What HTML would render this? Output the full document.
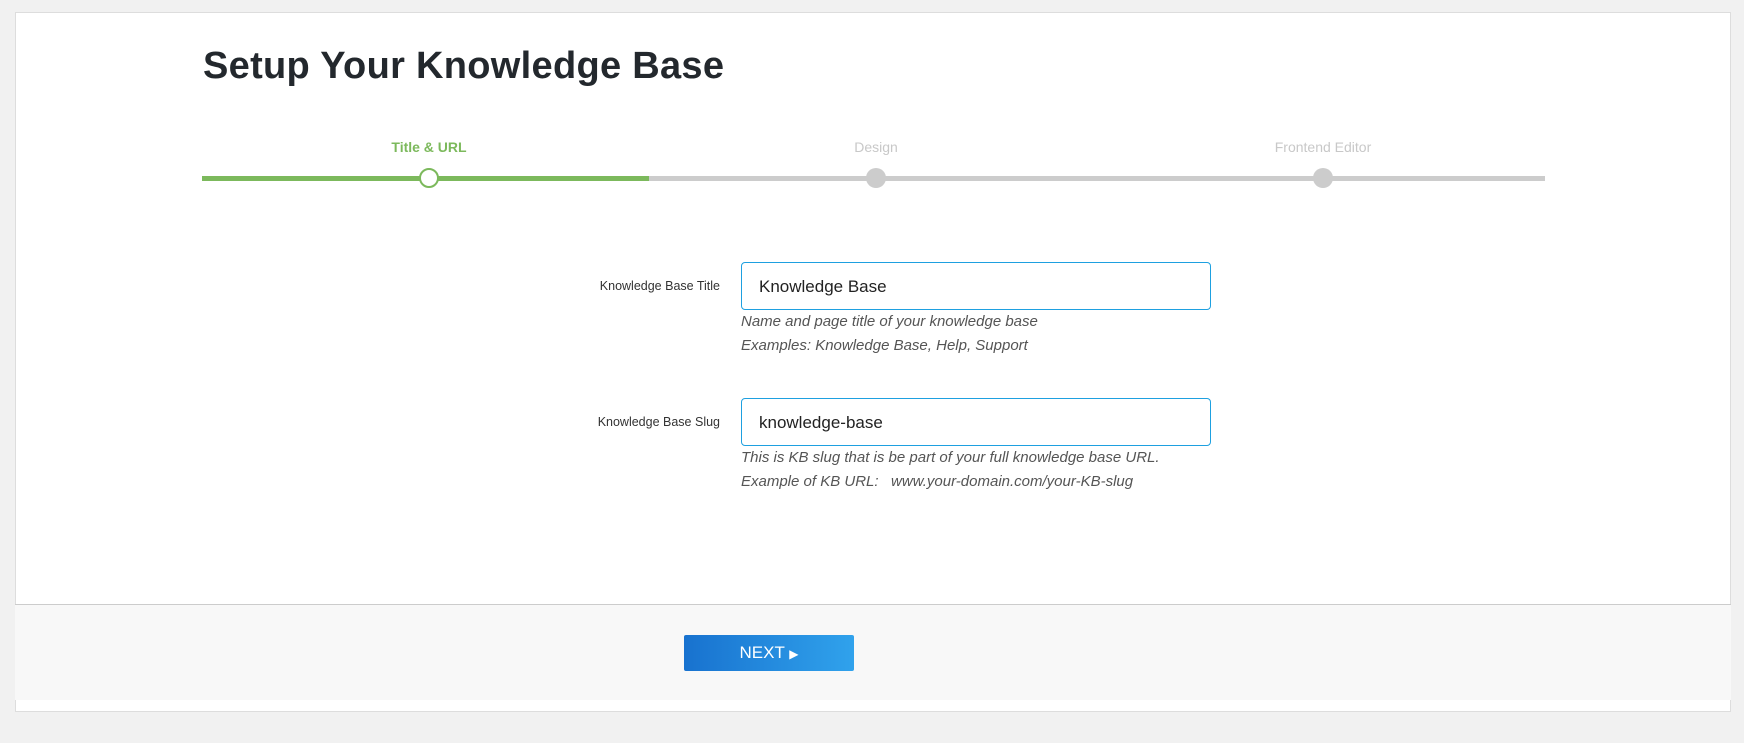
<!DOCTYPE html>
<html><head><meta charset="utf-8"><style>
*{margin:0;padding:0;box-sizing:border-box}
body{width:1744px;height:743px;background:#f1f1f1;font-family:"Liberation Sans",sans-serif;position:relative;overflow:hidden}
.panel{position:absolute;left:15px;top:12px;width:1716px;height:700px;background:#fff;border:1px solid #ddd}
.footer{position:absolute;left:15px;top:604px;width:1716px;height:96px;background:#f8f8f8;border-top:1px solid #ccc}
h1{position:absolute;left:203px;top:45px;font-size:38px;font-weight:bold;color:#23282d;letter-spacing:0.3px}
.line{position:absolute;top:176px;height:5px}
.dot{position:absolute;width:20px;height:20px;border-radius:50%;top:168px}
.lab{position:absolute;top:139px;font-size:14px;width:200px;text-align:center}
.fl{position:absolute;right:1024px;font-size:12.5px;color:#333;text-align:right}
.inp{position:absolute;left:741px;width:470px;height:48px;border:1px solid #1ea0e0;border-radius:4px;font-size:17px;color:#222;padding:14px 0 0 17px}
.help{position:absolute;left:741px;font-size:15px;font-style:italic;color:#555;line-height:24px}
.btn{position:absolute;left:684px;top:635px;width:170px;height:36px;background:linear-gradient(90deg,#1872cf,#30a2ec);border-radius:2px;color:#fff;font-size:17px;text-align:center;line-height:36px}
</style></head><body>
<div class="panel"></div>
<div class="footer"></div>
<h1>Setup Your Knowledge Base</h1>
<div class="line" style="left:202px;width:447px;background:#7cb95c"></div>
<div class="line" style="left:649px;width:896px;background:#cccccc"></div>
<div class="dot" style="left:419px;background:#fff;border:2px solid #7cb95c"></div>
<div class="dot" style="left:866px;background:#cccccc"></div>
<div class="dot" style="left:1313px;background:#cccccc"></div>
<div class="lab" style="left:329px;color:#7cb95c;font-weight:bold">Title &amp; URL</div>
<div class="lab" style="left:776px;color:#c8c8c8">Design</div>
<div class="lab" style="left:1223px;color:#c8c8c8">Frontend Editor</div>
<div class="fl" style="top:279px">Knowledge Base Title</div>
<div class="inp" style="top:262px">Knowledge Base</div>
<div class="help" style="top:310px">Name and page title of your knowledge base<br>Examples: Knowledge Base, Help, Support</div>
<div class="fl" style="top:415px">Knowledge Base Slug</div>
<div class="inp" style="top:398px">knowledge-base</div>
<div class="help" style="top:446px">This is KB slug that is be part of your full knowledge base URL.<br>Example of KB URL: &nbsp; www.your-domain.com/your-KB-slug</div>
<div class="btn">NEXT <span style="font-size:12px">&#9654;</span></div>
</body></html>
